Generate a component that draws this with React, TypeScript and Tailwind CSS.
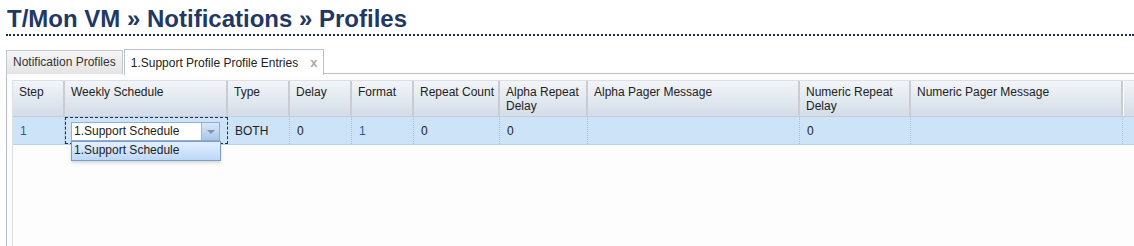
import React from "react";

const cols = [
  { label: "Step", w: 52, value: "1", blue: true },
  { label: "Weekly Schedule", w: 163, value: "" },
  { label: "Type", w: 62, value: "BOTH" },
  { label: "Delay", w: 62, value: "0" },
  { label: "Format", w: 62, value: "1", blue: true },
  { label: "Repeat Count", w: 86, value: "0" },
  { label: "Alpha Repeat Delay", w: 88, value: "0" },
  { label: "Alpha Pager Message", w: 212, value: "" },
  { label: "Numeric Repeat Delay", w: 111, value: "0" },
  { label: "Numeric Pager Message", w: 212, value: "" },
];

function Header() {
  return (
    <div className="flex h-[36px] bg-gradient-to-b from-[#f2f5f9] to-[#d3dde8] border-b border-[#c6ccd4]">
      {cols.map((c) => (
        <div
          key={c.label}
          style={{ width: c.w }}
          className="shrink-0 border-r-2 border-r-[#c9ccd0] pl-[6px] pt-[4px] leading-[14px] text-[12px] text-[#222]"
        >
          {c.label}
        </div>
      ))}
      <div className="flex-1 border-l border-white" />
    </div>
  );
}

function ScheduleEditor() {
  return (
    <div className="relative h-full w-full border border-dashed border-[#1d2a6b] pl-[5px] pt-[4px]">
      <div className="flex h-[19px] w-[149px] border border-[#8fb0d4] bg-white">
        <div className="flex-1 pl-[2px] leading-[17px] text-[12px] text-[#222]">1.Support Schedule</div>
        <div className="flex w-[18px] items-center justify-center border-l border-[#9fbbd9] bg-gradient-to-b from-[#d9e8f8] to-[#a9c6e8]">
          <svg width="8" height="4" viewBox="0 0 8 4">
            <path d="M0 0 L8 0 L4 4 Z" fill="#7f95ab" />
          </svg>
        </div>
      </div>
      <div className="absolute left-[5px] top-[23px] z-10 h-[20px] w-[150px] border border-[#7c9dc4] bg-gradient-to-b from-[#e3efff] to-[#bcd8f7] pl-[2px] leading-[17px] text-[12px] text-[#222] shadow-[0_2px_3px_rgba(0,0,0,0.15)]">
        1.Support Schedule
      </div>
    </div>
  );
}

function DataRow() {
  return (
    <div className="flex h-[28px] bg-[#cde3f7] border-b border-[#b9d3ee]">
      {cols.map((c, i) =>
        i === 1 ? (
          <div key={c.label} style={{ width: c.w }} className="shrink-0">
            <ScheduleEditor />
          </div>
        ) : (
          <div
            key={c.label}
            style={{ width: c.w }}
            className={`shrink-0 border-r border-dotted border-r-[#aebfd2] pl-[7px] leading-[28px] text-[12px] ${
              c.blue ? "text-[#1b5fa8]" : "text-[#222]"
            }`}
          >
            {c.value}
          </div>
        )
      )}
    </div>
  );
}

export default function App() {
  return (
    <div className="h-[246px] w-[1134px] overflow-hidden bg-white font-['Liberation_Sans',Arial,sans-serif]">
      <div className="ml-[6px] border-b-2 border-dotted border-[#1c2d54] pb-[1px] pt-[4px] pl-[1px]">
        <h1 className="text-[24px] font-bold leading-[29px] text-[#1f3864]">
          T/Mon VM » Notifications » Profiles
        </h1>
      </div>

      <div className="mt-[13px] ml-[6px] flex items-end">
        <div className="h-[24px] border border-b-0 border-[#c3c7cc] bg-gradient-to-b from-[#f5f5f5] to-[#e4e4e4] px-[6px] leading-[23px] text-[12px] text-[#333]">
          Notification Profiles
        </div>
        <div className="-mb-px ml-[1px] flex h-[26px] items-center border border-b-0 border-[#b8c1cf] bg-white pl-[6px] pr-[6px] text-[12px] text-[#222]">
          <span>1.Support Profile Profile Entries</span>
          <span className="ml-[12px] text-[13px] font-bold leading-none text-[#a9a9a9]">x</span>
        </div>
        <div className="flex-1 border-b border-[#b8c1cf]" />
      </div>

      <div className="ml-[6px] h-[200px] border-l border-[#b4bccb] bg-[#fdfdfd] pl-[5px] pt-[6px]">
        <div className="h-full border-l border-t border-[#dcdfe3]">
          <Header />
          <DataRow />
        </div>
      </div>
    </div>
  );
}
